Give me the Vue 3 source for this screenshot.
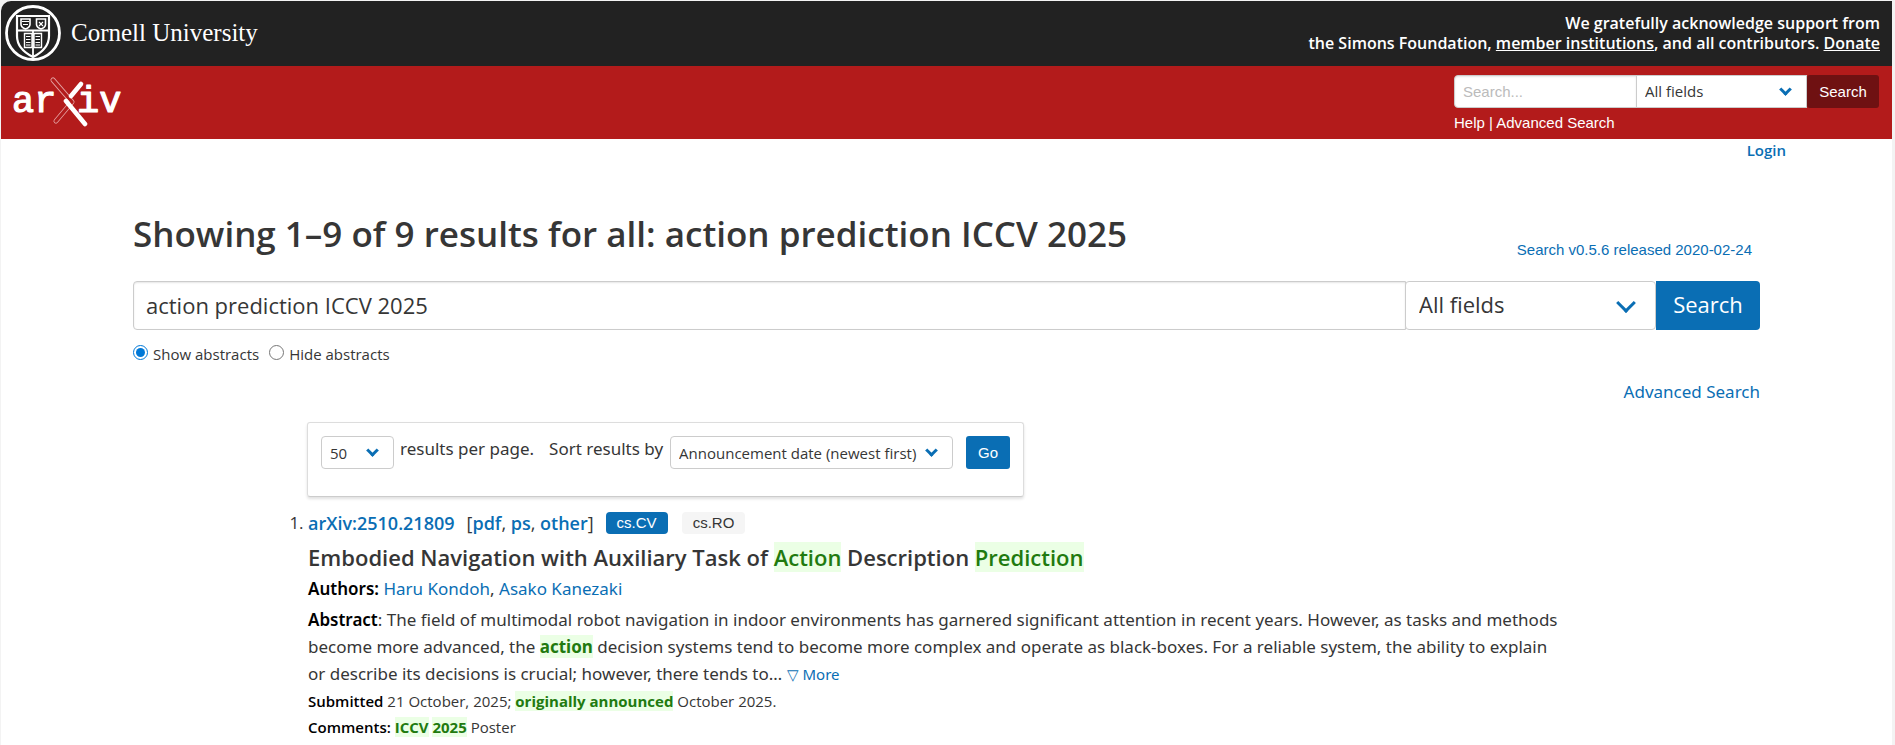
<script setup>
import { ref } from 'vue'

const headerQuery = ref('')
const headerField = ref('All fields')
const query = ref('action prediction ICCV 2025')
const field = ref('All fields')
const abstracts = ref('show')
const size = ref('50')
const order = ref('Announcement date (newest first)')

const fields = ['All fields', 'Title', 'Author(s)', 'Abstract', 'Comments']
const sizes = ['25', '50', '100', '200']
const orders = [
  'Announcement date (newest first)',
  'Announcement date (oldest first)',
  'Submission date (newest first)',
  'Relevance',
]

const formats = ['pdf', 'ps', 'other']
const authors = ['Haru Kondoh', 'Asako Kanezaki']
</script>

<template>
  <div class="page">
    <header>
      <div class="support">
        <a href="#" class="cornell">
          <svg class="seal" viewBox="0 0 56 56" fill="none" stroke="#fff" aria-hidden="true">
            <circle cx="28" cy="28" r="26.5" stroke-width="2.8" />
            <path d="M12 11h32v20c0 10-6 16-16 21c-10-5-16-11-16-21z" stroke-width="2.2" />
            <path d="M12 25.5h32M28 26v25" stroke-width="1.8" />
            <path d="M16 14h9v5.500c0 2-2 3.500-4.500 4.500c-2.500-1-4.500-2.500-4.500-4.500zM31.500 14h9v5.500c0 2-2 3.500-4.500 4.500c-2.500-1-4.500-2.500-4.500-4.500z" stroke-width="1.6" />
            <path d="M17 16.500h7M18 19.500h5M34 17l2 2l2-2M34 21l2-2l2 2" stroke-width="1.2" />
            <path d="M19.500 28.500h7.500v14h-7.500zM29 28.500h7.500v14H29z" stroke-width="1.4" />
            <path d="M21 31.500h4.500M21 34.500h4.500M21 37.500h4.500M21 40h4.500M30.500 31.500H35M30.500 34.500H35M30.500 37.500H35M30.500 40H35" stroke-width="1.2" />
          </svg>
          <span>Cornell University</span>
        </a>
        <p class="thanks">
          We gratefully acknowledge support from<br />
          the Simons Foundation, <a href="#">member institutions</a>, and all contributors.
          <a href="#">Donate</a>
        </p>
      </div>

      <div class="brand">
        <a href="#" class="logo" aria-label="arXiv">
          <svg viewBox="0 0 112 52">
            <g fill="#fff" stroke="#fff" stroke-width="1.2" stroke-linejoin="round" class="logo-text">
              <text x="0" y="37">ar</text>
              <text x="65" y="37">iv</text>
            </g>
            <g stroke-linecap="round" fill="none">
              <path d="M41 5L60 27M44 46L60 27" stroke="#e3a0a0" stroke-width="5" />
              <path d="M41 5L60 27M44 46L60 27" stroke="#b31b1b" stroke-width="3.400" />
              <path d="M69 9L59 21" stroke="#fff" stroke-width="4.600" />
              <path d="M54 26L73 49" stroke="#fff" stroke-width="4.600" />
            </g>
          </svg>
        </a>
        <form class="mini" @submit.prevent>
          <div class="addons">
            <input v-model="headerQuery" type="text" placeholder="Search..." aria-label="Search term" />
            <div class="select">
              <select v-model="headerField" aria-label="Field to search">
                <option v-for="f in fields" :key="f">{{ f }}</option>
              </select>
            </div>
            <button>Search</button>
          </div>
          <p class="help"><a href="#">Help</a> | <a href="#">Advanced Search</a></p>
        </form>
      </div>
    </header>

    <div class="login"><a href="#">Login</a></div>

    <main>
      <div class="heading">
        <h1>Showing 1–9 of 9 results for all: action prediction ICCV 2025</h1>
        <a href="#" class="version">Search v0.5.6 released 2020-02-24</a>
      </div>

      <form @submit.prevent>
        <div class="addons large">
          <input v-model="query" type="text" aria-label="Search term or terms" />
          <div class="select">
            <select v-model="field" aria-label="Field">
              <option v-for="f in fields" :key="f">{{ f }}</option>
            </select>
          </div>
          <button>Search</button>
        </div>
        <div class="radios">
          <label><input v-model="abstracts" type="radio" name="abstracts" value="show" /> Show abstracts</label>
          <label><input v-model="abstracts" type="radio" name="abstracts" value="hide" /> Hide abstracts</label>
        </div>
        <div class="advanced"><a href="#">Advanced Search</a></div>
      </form>

      <section class="results">
        <form class="sort" @submit.prevent>
          <div class="select">
            <select id="size" v-model="size">
              <option v-for="s in sizes" :key="s">{{ s }}</option>
            </select>
          </div>
          <label for="size" class="per-page">results per page.</label>
          <label for="order" class="sort-by">Sort results by</label>
          <div class="select order">
            <select id="order" v-model="order">
              <option v-for="o in orders" :key="o">{{ o }}</option>
            </select>
          </div>
          <button>Go</button>
        </form>

        <ol>
          <li>
            <div class="entry">
              <p class="links">
                <a href="#">arXiv:2510.21809</a>
                <span class="formats">[<template v-for="(f, i) in formats" :key="f"><a href="#">{{ f }}</a><template v-if="i < formats.length - 1">, </template></template>]</span>
              </p>
              <span class="tag primary">cs.CV</span>
              <span class="tag">cs.RO</span>
            </div>
            <h2>
              Embodied Navigation with Auxiliary Task of <mark>Action</mark> Description
              <mark>Prediction</mark>
            </h2>
            <p class="authors">
              <strong>Authors:</strong>{{ ' ' }}
              <template v-for="(a, i) in authors" :key="a"><a href="#">{{ a }}</a><template v-if="i < authors.length - 1">, </template></template>
            </p>
            <p v-if="abstracts === 'show'" class="abstract">
              <strong>Abstract</strong>: The field of multimodal robot navigation in indoor
              environments has garnered significant attention in recent years. However, as tasks and
              methods become more advanced, the <mark>action</mark> decision systems tend to become
              more complex and operate as black-boxes. For a reliable system, the ability to explain
              or describe its decisions is crucial; however, there tends to…
              <a href="#" class="more">▽ More</a>
            </p>
            <p class="meta">
              <strong>Submitted</strong> 21 October, 2025; <mark>originally announced</mark> October
              2025.
            </p>
            <p class="meta">
              <strong>Comments:</strong> <mark>ICCV</mark> <mark>2025</mark> Poster
            </p>
          </li>
        </ol>
      </section>
    </main>
  </div>
</template>

<style>
body {
  background: #f3f3f3;
}
</style>

<style scoped>
.page {
  margin: 1px 3px 0 1px;
  min-height: calc(100vh - 1px);
  background: #fff;
  border-top-left-radius: 10px;
  overflow: hidden;
  font-family: 'Open Sans', 'Liberation Sans', sans-serif;
  font-size: 17px;
  line-height: 26px;
  color: #363636;
}

p,
h1,
h2,
ol {
  margin: 0;
}

a {
  color: #0a6eb4;
  text-decoration: none;
}

button,
input,
select {
  box-sizing: border-box;
  margin: 0;
  font-family: inherit;
  color: #363636;
}

/* Header */
.support {
  display: flex;
  justify-content: space-between;
  align-items: center;
  box-sizing: border-box;
  height: 65px;
  padding: 0 12px 2px 4px;
  background: #222;
  color: #fff;
}

.cornell {
  display: flex;
  align-items: center;
  gap: 10px;
  color: #fff;
  font-family: 'Liberation Serif', serif;
  font-size: 25px;
}

.seal {
  width: 56px;
  height: 56px;
}

.thanks {
  font-size: 16px;
  font-weight: 600;
  line-height: 20px;
  text-align: right;
}

.thanks a {
  color: #fff;
  text-decoration: underline;
}

.brand {
  display: flex;
  justify-content: space-between;
  height: 73px;
  padding: 0 13px 0 11px;
  background: #b31b1b;
}

.logo {
  padding-top: 9px;
}

.logo svg {
  display: block;
  width: 112px;
  height: 52px;
}

.logo-text {
  font: 37px 'Liberation Mono', monospace;
}

.mini {
  padding-top: 9px;
  font-family: 'Liberation Sans', sans-serif;
}

.addons {
  display: flex;
}

.addons input,
select {
  height: 33px;
  border: 1px solid #ccc;
  border-radius: 4px;
  background: #fff;
  outline: none;
}

.addons input {
  border-radius: 4px 0 0 4px;
  box-shadow: inset 0 1px 2px rgba(10, 10, 10, 0.1);
}

.mini input {
  width: 183px;
  padding: 0 8px;
  font-size: 15px;
}

.mini input::placeholder {
  color: #bbb;
}

.select {
  position: relative;
}

select {
  display: block;
  appearance: none;
  width: 100%;
  padding: 0 8px;
  font-family: 'Open Sans', sans-serif;
  font-size: 15px;
}

.select::after {
  content: '';
  position: absolute;
  right: 17px;
  top: 10px;
  width: 6px;
  height: 6px;
  border: solid #0a6eb4;
  border-width: 0 3px 3px 0;
  transform: rotate(45deg);
  pointer-events: none;
}

.mini .select {
  width: 171px;
  margin-left: -1px;
}

.mini select {
  padding-bottom: 2px;
  border-radius: 0;
}

button {
  border: 0;
  border-radius: 3px;
  background: #0a6eb4;
  color: #fff;
  cursor: pointer;
}

.mini button {
  width: 72px;
  background: #6f1112;
  font-size: 15px;
}

.help {
  margin-top: 5px;
  font-size: 15px;
  line-height: 20px;
  color: #fff;
}

.help a {
  color: #fff;
}

.login {
  padding-right: 106px;
  font-size: 15px;
  font-weight: 600;
  line-height: 22px;
  text-align: right;
}

/* Search */
main {
  padding: 47px 132px 0;
}

.heading {
  display: flex;
  justify-content: space-between;
  align-items: flex-end;
  padding-right: 8px;
}

h1 {
  font-size: 35px;
  font-weight: 600;
  line-height: 52px;
}

.version {
  font-family: 'Liberation Sans', sans-serif;
  font-size: 15px;
  line-height: 20px;
}

.large {
  margin-top: 21px;
}

.large input {
  flex: 1;
  height: 49px;
  padding: 0 12px 2px;
  font-size: 22px;
}

.large .select {
  width: 251px;
  margin-left: -1px;
}

.large select {
  height: 49px;
  padding: 0 13px 3px;
  font-size: 22px;
}

.large .select::after {
  right: 23px;
  top: 15px;
  width: 11px;
  height: 11px;
}

.large button {
  width: 104px;
  padding-bottom: 4px;
  border-radius: 0 4px 4px 0;
  font-size: 22px;
}

.radios {
  display: flex;
  gap: 10px;
  margin-top: 12px;
  font-size: 15px;
  line-height: 24px;
}

.radios label {
  display: flex;
  gap: 5px;
}

.radios input {
  width: 15px;
  height: 15px;
  margin-top: 3px;
  accent-color: #0078d7;
}

.advanced {
  margin-top: 13px;
  font-family: 'Noto Sans', sans-serif;
  text-align: right;
}

/* Results */
.results {
  padding: 17px 0 0 174px;
}

.sort {
  display: flex;
  width: fit-content;
  box-sizing: border-box;
  height: 75px;
  padding: 13px 13px 0;
  border: 1px solid #ddd;
  border-bottom-color: #ccc;
  border-radius: 3px;
  box-shadow: 0 2px 3px rgba(10, 10, 10, 0.12);
  font-family: 'Noto Sans', sans-serif;
}

.sort select {
  width: 73px;
}

.sort .order select {
  width: 283px;
}

.per-page {
  margin: 0 15px 0 6px;
}

.sort-by {
  margin-right: 7px;
}

.sort button {
  width: 44px;
  height: 33px;
  margin-left: 13px;
  font-family: 'Liberation Sans', sans-serif;
  font-size: 15px;
}

ol {
  max-width: 1255px;
  margin-top: 13px;
  padding: 0 0 0 1px;
}

.entry {
  display: inline-flex;
  align-items: center;
  vertical-align: top;
}

.links {
  font-size: 18px;
}

.links a {
  font-weight: 600;
}

.formats {
  margin-left: 12px;
}

.tag {
  margin-left: 14px;
  padding: 0 11px;
  border-radius: 4px;
  background: #f5f5f5;
  font-family: 'Liberation Sans', sans-serif;
  font-size: 15px;
  line-height: 22px;
}

.links + .tag {
  margin-left: 12px;
}

.tag.primary {
  background: #0a6eb4;
  color: #fff;
}

h2 {
  margin-top: 5px;
  font-size: 22px;
  font-weight: 600;
  line-height: 32px;
}

strong {
  font-weight: 600;
  color: #000;
}

mark {
  background: #ebffe5;
  color: #217a0f;
  font-weight: 700;
}

h2 mark {
  font-weight: 600;
}

.authors {
  margin-top: 3px;
  font-family: 'Noto Sans', sans-serif;
}

.abstract {
  margin-top: 4px;
  font-family: 'Noto Sans', sans-serif;
  line-height: 27px;
}

.more {
  font-size: 15px;
}

.meta {
  font-size: 15px;
}
</style>
